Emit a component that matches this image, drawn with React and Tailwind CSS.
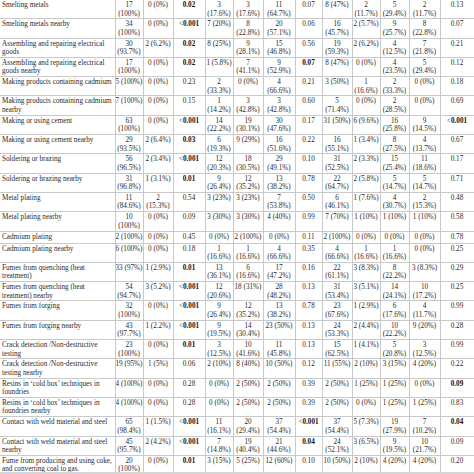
import React from "react";

const B = (v) => ({ b: v });
const L = (v) => ({ lt: v });

const rows = [
  [["Smelting metals"], "17 (100%)", "0 (0%)", B("0.02"), "3 (17.6%)", "3 (17.6%)", "11 (64.7%)", "0.07", "8 (47%)", "2 (11.7%)", "5 (29.4%)", "2 (11.7%)", "0.13"],
  [["Smelting metals nearby"], "34 (100%)", "0 (0%)", L("0.001"), "7 (20%)", "8 (22.8%)", "20 (57.1%)", "0.06", "16 (45.7%)", "2 (5.7%)", "9 (25.7%)", "8 (22.8%)", "0.07"],
  [["Assembling and repairing electrical", "goods"], "30 (93.7%)", "2 (6.2%)", B("0.02"), "8 (25%)", "9 (28.1%)", "15 (46.8%)", "0.56", "19 (59.3%)", "2 (6.2%)", "4 (12.5%)", "7 (21.8%)", "0.21"],
  [["Assembling and repairing electrical", "goods nearby"], "17 (100%)", "0 (0%)", B("0.02"), "1 (5.8%)", "7 (41.1%)", "9 (52.9%)", B("0.07"), "8 (47%)", "0 (0%)", "4 (23.5%)", "5 (29.4%)", "0.12"],
  [["Making products containing cadmium"], "5 (100%)", "0 (0%)", "0.23", "2 (33.3%)", "0 (0%)", "4 (66.6%)", "0.21", "3 (50%)", "1 (16.6%)", "2 (33.3%)", "0 (0%)", "0.18"],
  [["Making products containing cadmium", "nearby"], "7 (100%)", "0 (0%)", "0.15", "1 (14.2%)", "3 (42.8%)", "3 (42.8%)", "0.60", "5 (71.4%)", "0 (0%)", "2 (28.5%)", "0 (0%)", "0.69"],
  [["Making or using cement"], "63 (100%)", "0 (0%)", L("0.001"), "14 (22.2%)", "19 (30.1%)", "30 (47.6%)", "0.17", "31 (50%)", "6 (9.6%)", "16 (25.8%)", "9 (14.5%)", L("0.001")],
  [["Making or using cement nearby"], "29 (93.5%)", "2 (6.4%)", B("0.03"), "6 (19.3%)", "9 (29%)", "16 (51.6%)", "0.22", "16 (55.1%)", "1 (3.4%)", "8 (27.5%)", "4 (13.7%)", "0.67"],
  [["Soldering or brazing"], "56 (96.5%)", "2 (3.4%)", L("0.001"), "12 (20.3%)", "18 (30.5%)", "29 (49.1%)", "0.10", "31 (52.5%)", "2 (3.3%)", "15 (25.4%)", "11 (18.6%)", "0.17"],
  [["Soldering or brazing nearby"], "31 (96.8%)", "1 (3.1%)", B("0.01"), "9 (26.4%)", "12 (35.2%)", "13 (38.2%)", "0.78", "22 (64.7%)", "2 (5.8%)", "5 (14.7%)", "5 (14.7%)", "0.71"],
  [["Metal plating"], "11 (84.6%)", "2 (15.3%)", "0.54", "3 (23%)", "3 (23%)", "7 (53.8%)", "0.50", "6 (46.1%)", "1 (7.6%)", "4 (30.7%)", "2 (15.3%)", "0.48"],
  [["Metal plating nearby"], "10 (100%)", "0 (0%)", "0.09", "3 (30%)", "3 (30%)", "4 (40%)", "0.99", "7 (70%)", "1 (10%)", "1 (10%)", "1 (10%)", "0.58"],
  [["Cadmium plating"], "2 (100%)", "0 (0%)", "0.45", "0 (0%)", "2 (100%)", "0 (0%)", "0.11", "2 (100%)", "0 (0%)", "0 (0%)", "0 (0%)", "0.78"],
  [["Cadmium plating nearby"], "6 (100%)", "0 (0%)", "0.18", "1 (16.6%)", "1 (16.6%)", "4 (66.6%)", "0.35", "4 (66.6%)", "1 (16.6%)", "1 (16.6%)", "0 (0%)", "0.25"],
  [["Fumes from quenching (heat", "treatment)"], "33 (97%)", "1 (2.9%)", B("0.01"), "13 (36.1%)", "6 (16.6%)", "17 (47.2%)", "0.16", "22 (61.1%)", "3 (8.3%)", "8 (22.2%)", "3 (8.3%)", "0.29"],
  [["Fumes from quenching (heat", "treatment) nearby"], "54 (94.7%)", "3 (5.2%)", L("0.001"), "12 (20.6%)", "18 (31%)", "28 (48.2%)", "0.13", "31 (53.4%)", "3 (5.1%)", "14 (24.1%)", "10 (17.2%)", "0.25"],
  [["Fumes from forging"], "32 (100%)", "0 (0%)", L("0.001"), "9 (26.4%)", "12 (35.2%)", "13 (38.2%)", "0.78", "23 (67.6%)", "1 (2.9%)", "6 (17.6%)", "4 (11.7%)", "0.99"],
  [["Fumes from forging nearby"], "43 (97.7%)", "1 (2.2%)", L("0.001"), "9 (19.5%)", "14 (30.4%)", "23 (50%)", "0.13", "24 (53.3%)", "2 (4.4%)", "10 (22.2%)", "9 (20%)", "0.28"],
  [["Crack detection /Non-destructive", "testing"], "23 (100%)", "0 (0%)", B("0.01"), "3 (12.5%)", "10 (41.6%)", "11 (45.8%)", "0.13", "15 (62.5%)", "1 (4.1%)", "5 (20.8%)", "3 (12.5%)", "0.99"],
  [["Crack detection /Non-destructive", "testing nearby"], "19 (95%)", "1 (5%)", "0.06", "2 (10%)", "8 (40%)", "10 (50%)", "0.12", "11 (55%)", "2 (10%)", "3 (15%)", "4 (20%)", "0.22"],
  [["Resins in \u2018cold box\u2019 techniques in", "foundries"], "4 (100%)", "0 (0%)", "0.28", "0 (0%)", "2 (50%)", "2 (50%)", "0.39", "2 (50%)", "1 (25%)", "1 (25%)", "0 (0%)", B("0.09")],
  [["Resins in \u2018cold box\u2019 techniques in", "foundries nearby"], "4 (100%)", "0 (0%)", "0.28", "0 (0%)", "2 (50%)", "2 (50%)", "0.39", "2 (50%)", "0 (0%)", "1 (25%)", "1 (25%)", "0.83"],
  [["Contact with weld material and steel"], "65 (98.4%)", "1 (1.5%)", L("0.001"), "11 (16.1%)", "20 (29.4%)", "37 (54.4%)", L("0.001"), "37 (54.4%)", "5 (7.3%)", "19 (27.9%)", "7 (10.2%)", B("0.04")],
  [["Contact with weld material and steel", "nearby"], "45 (95.7%)", "2 (4.2%)", L("0.001"), "7 (14.8%)", "19 (40.4%)", "21 (44.6%)", B("0.04"), "24 (52.1%)", "3 (6.5%)", "9 (19.5%)", "10 (21.7%)", "0.09"],
  [["Fume from producing and using coke,", "and converting coal to gas."], "20 (100%)", "0 (0%)", B("0.01"), "3 (15%)", "5 (25%)", "12 (60%)", "0.10", "10 (50%)", "2 (10%)", "4 (20%)", "4 (20%)", "0.20"],
];

const widths = [115, 28, 30, 32, 28, 30, 32, 27, 30, 28, 29, 31, 34];

function Cell({ v }) {
  if (Array.isArray(v)) {
    return v.map((line, i) => (
      <div key={i} className="whitespace-nowrap">
        {line}
      </div>
    ));
  }
  if (typeof v === "string") {
    if (v.length >= 9) {
      const k = v.indexOf(" ");
      return (
        <>
          <div className="whitespace-nowrap">{v.slice(0, k)}</div>
          <div className="whitespace-nowrap">{v.slice(k + 1)}</div>
        </>
      );
    }
    return <div className="whitespace-nowrap">{v}</div>;
  }
  if (v.b) return <b className="font-bold text-[#111]">{v.b}</b>;
  return (
    <span className="whitespace-nowrap">
      {"<"}
      <b className="font-bold text-[#111]">{v.lt}</b>
    </span>
  );
}

export default function App() {
  return (
    <div className="w-[474px] h-[474px] overflow-hidden bg-white relative" style={{ fontFamily: '"Liberation Serif", "Times New Roman", serif' }}>
      <table className="table-fixed border-collapse w-[474px] -mt-[1px] text-[7.2px] leading-[8.5px] text-[#2a2a2a]">
        <colgroup>
          {widths.map((w, i) => (
            <col key={i} style={{ width: w }} />
          ))}
        </colgroup>
        <tbody>
          {rows.map((r, ri) => (
            <tr key={ri} className={(ri === 12 ? "h-[12px] " : "h-[19.3px] ") + "border-y border-[#c9c9c9]"}>
              {r.map((c, ci) => (
                <td
                  key={ci}
                  className={
                    ci === 0
                      ? "align-top text-left pl-[2px] pr-0 pt-[1px] pb-0 border-r border-[#c9c9c9] overflow-hidden"
                      : "align-top text-center px-0 pt-[1px] pb-0 border-x border-[#c9c9c9] overflow-hidden"
                  }
                >
                  <Cell v={c} />
                </td>
              ))}
            </tr>
          ))}
        </tbody>
      </table>
      <div className="absolute left-0 right-0 bottom-0 h-[2px] bg-[#d6d6d6]" />
    </div>
  );
}
